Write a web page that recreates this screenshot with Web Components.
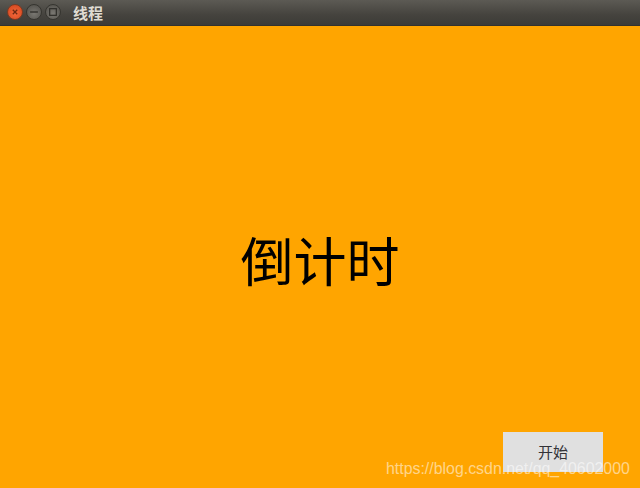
<!DOCTYPE html>
<html lang="zh-CN"><head><meta charset="utf-8">
<style>html,body{margin:0;padding:0;width:640px;height:488px;overflow:hidden;background:#ffa500}</style>
</head><body>
<app-window>
  <title-bar slot="bar" title="线程"></title-bar>
  <count-label>倒计时</count-label>
  <push-button slot="actions">开始</push-button>
</app-window>
<water-mark>https://blog.csdn.net/qq_40602000</water-mark>
<script>
function def(name,html){customElements.define(name,class extends HTMLElement{constructor(){super();this.attachShadow({mode:'open'}).innerHTML=html;}
connectedCallback(){const t=this.shadowRoot.querySelector('[data-title]');if(t)t.textContent=this.getAttribute('title');}});}
def('app-window',`<style>:host{display:flex;flex-direction:column;width:640px;height:488px;background:#ffa500}
main{flex:1;display:flex;align-items:center;justify-content:center;padding-top:60px;min-height:0}
footer{display:flex;justify-content:flex-end;padding:0 37px 16px 0}
</style><slot name="bar"></slot><main><slot></slot></main><footer><slot name="actions"></slot></footer>`);
def('title-bar',`<style>:host{display:flex;align-items:center;height:26px;box-sizing:border-box;padding:0 0 1px 7px;background:linear-gradient(#5c5a54,#45433e 60%,#3c3b37);border-bottom:1px solid #33322e;font:bold 15px "Noto Sans CJK SC","Liberation Sans",sans-serif;color:#dfdbd2}
.b{width:16px;height:16px;border-radius:50%;margin-right:3px;box-sizing:border-box;display:flex;align-items:center;justify-content:center;background:radial-gradient(circle at 50% 60%,#7a7872,#4e4c47);border:1px solid #363530}
.b.c{background:radial-gradient(circle at 50% 60%,#f4683c,#d0431a);border-color:#7d3a22}
svg{width:10px;height:10px;display:block}
span{margin-left:9px;line-height:1}
</style>
<div class="b c"><svg viewBox="0 0 9 9"><path d="M2.5 2.5l4 4M6.5 2.5l-4 4" stroke="#6e2a12" stroke-width="1.2"/></svg></div>
<div class="b"><svg viewBox="0 0 9 9"><path d="M1 4.5h7" stroke="#2f2e2a" stroke-width="1.2"/></svg></div>
<div class="b"><svg viewBox="0 0 9 9"><rect x="1.5" y="1.5" width="6" height="6" fill="none" stroke="#2f2e2a" stroke-width="1.1"/></svg></div>
<span data-title></span>`);
def('count-label',`<style>:host{display:block;font:53px/1 "Noto Sans CJK SC","Liberation Sans",sans-serif;color:#000}</style><slot></slot>`);
def('push-button',`<style>:host{display:flex;align-items:center;justify-content:center;box-sizing:border-box;width:100px;height:40px;padding-bottom:2px;background:#e0e0e0;color:#333338;font:15px "Noto Sans CJK SC","Liberation Sans",sans-serif}</style><slot></slot>`);
def('water-mark',`<style>:host{display:block;position:absolute;left:386px;top:459px;font:15.9px/20px "Liberation Sans",sans-serif;color:rgba(255,255,255,.55);white-space:nowrap}</style><slot></slot>`);
</script></body></html>
